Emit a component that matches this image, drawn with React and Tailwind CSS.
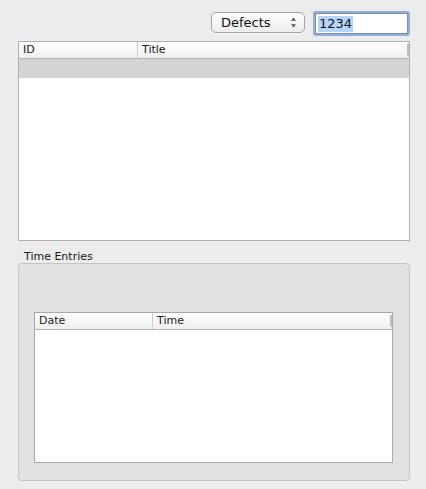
import React from "react";

const font = { fontFamily: '"DejaVu Sans", "Liberation Sans", sans-serif' };

function HeaderCell({ children, className = "" }) {
  return (
    <div className={`flex h-full items-center pl-[4px] text-[11px] text-[#1a1a1a] ${className}`}>
      {children}
    </div>
  );
}

function TableHeader({ firstWidth, first, second }) {
  return (
    <div className="relative flex h-[17px] shrink-0 border-b border-[#b3b3b3] bg-gradient-to-b from-[#ffffff] to-[#efefef]">
      <div className="h-full border-r border-[#cfcfcf]" style={{ width: firstWidth }}>
        <HeaderCell>{first}</HeaderCell>
      </div>
      <div className="flex-1">
        <HeaderCell>{second}</HeaderCell>
      </div>
      <div className="my-[2px] w-[2px] bg-[#bdbdbd]" />
    </div>
  );
}

function UpDownArrows() {
  return (
    <svg width="7" height="11" viewBox="0 0 7 11" className="shrink-0">
      <path d="M3.5 0.5 L6 3.8 L1 3.8 Z" fill="#555" />
      <path d="M3.5 10.5 L6 7.2 L1 7.2 Z" fill="#555" />
    </svg>
  );
}

export default function App() {
  return (
    <div className="flex h-[489px] w-[426px] flex-col bg-[#ececec]" style={font}>
      {/* toolbar: kind picker + id field */}
      <div className="flex justify-end gap-[8px] pr-[16px] pt-[11px]">
        <div className="mt-[1px] flex h-[21px] w-[94px] items-center justify-between rounded-[5px] border border-[#a3a3a3] bg-gradient-to-b from-[#ffffff] to-[#ededed] pl-[9px] pr-[7px] shadow-[0_1px_0_rgba(255,255,255,0.6)]">
          <span className="text-[13px] leading-none text-[#111]">Defects</span>
          <UpDownArrows />
        </div>
        <div className="h-[25px] w-[97px] rounded-[3px] bg-[#8eb1dc] p-[2px]">
          <div className="flex h-full w-full items-center border border-[#7f8fa6] bg-white pl-[2px]">
            <span className="bg-[#b4d5fe] px-[1px] text-[13px] leading-[16px] text-[#111]">1234</span>
          </div>
        </div>
      </div>

      {/* defects table */}
      <div className="ml-[18px] mr-[16px] mt-[5px] flex h-[200px] flex-col border border-[#b1b1b1] bg-white">
        <TableHeader firstWidth={119} first="ID" second="Title" />
        <div className="h-[19px] shrink-0 bg-[#d4d4d4]" />
        <div className="flex-1 bg-white" />
      </div>

      {/* time entries group */}
      <div className="ml-[24px] mt-[9px] text-[11px] leading-[13px] text-[#1a1a1a]">Time Entries</div>
      <div className="ml-[18px] mr-[16px] mt-[0px] flex h-[218px] flex-col rounded-[4px] border border-[#c4c4c4] bg-[#e2e2e2] pb-[17px] pl-[15px] pr-[16px] pt-[48px]">
        <div className="flex flex-1 flex-col border border-[#a9a9a9] bg-white">
          <TableHeader firstWidth={118} first="Date" second="Time" />
          <div className="flex-1 bg-white" />
        </div>
      </div>
    </div>
  );
}
